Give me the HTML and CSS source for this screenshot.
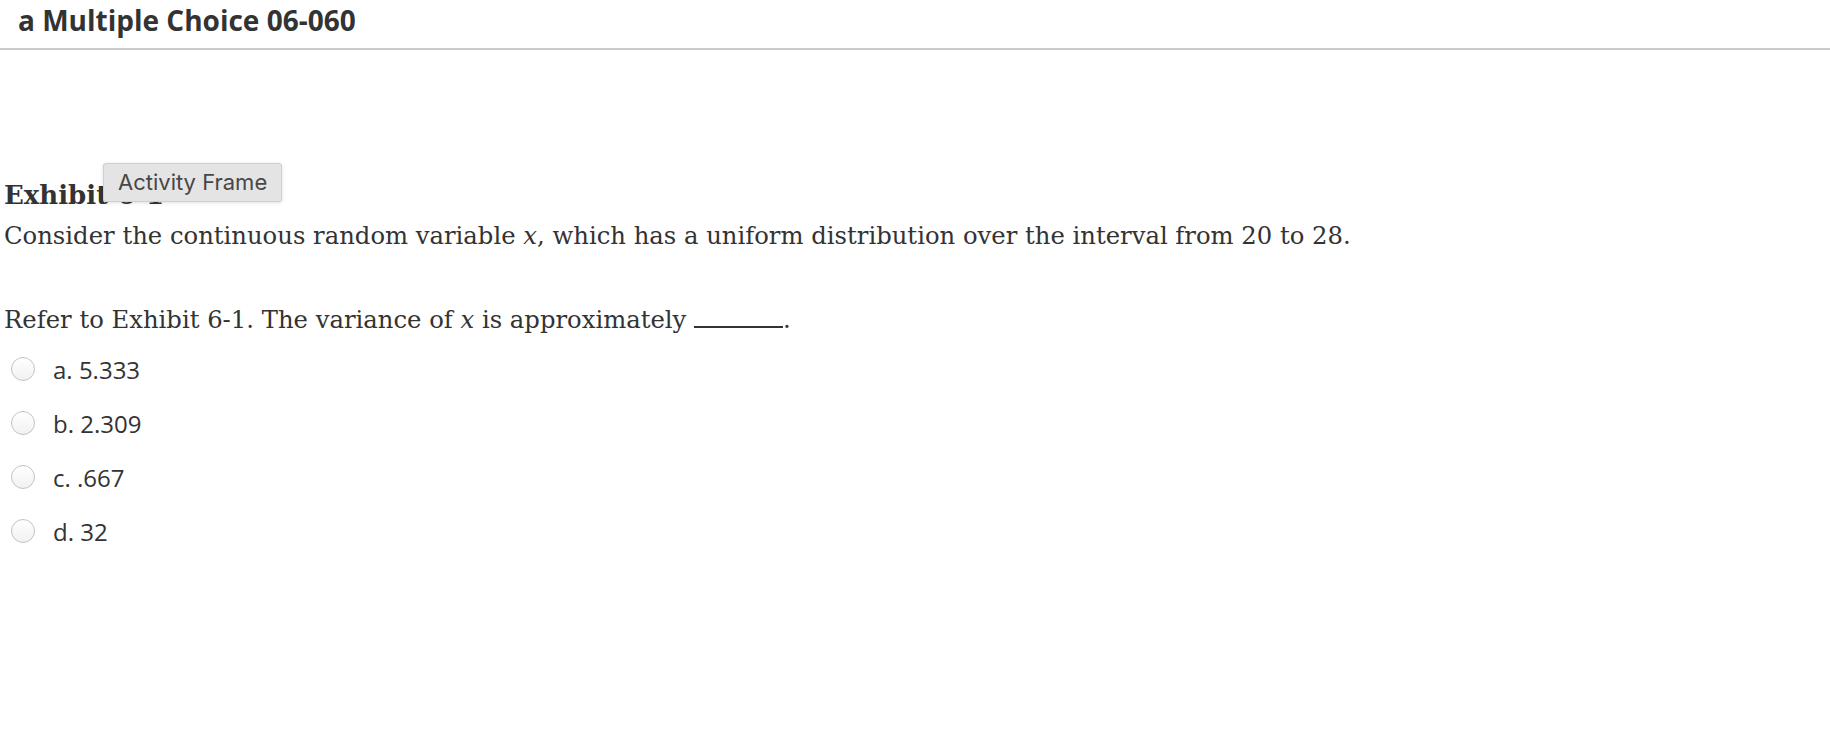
FILE: index.html
```html
<!DOCTYPE html>
<html lang="en">
<head>
  <meta charset="UTF-8" />
  <title>a Multiple Choice 06-060</title>
  <link rel="stylesheet" href="styles.css">
</head>
<body>
  <div class="title-bar">
    <h1>a Multiple Choice 06-060</h1>
  </div>

  <div class="question">
    <div class="exhibit">
      <h2>Exhibit 6-1</h2>
      <div class="tooltip">Activity Frame</div>
    </div>
    <p class="stem">Consider the continuous random variable <i>x</i>, which has a uniform distribution over the interval from 20 to 28.</p>

    <p class="prompt">Refer to Exhibit 6-1. The variance of <i>x</i> is approximately <span class="blank"></span>.</p>

    <ul class="choices">
      <li><span class="radio"></span>a. 5.333</li>
      <li><span class="radio"></span>b. 2.309</li>
      <li><span class="radio"></span>c. .667</li>
      <li><span class="radio"></span>d. 32</li>
    </ul>
  </div>
</body>
</html>
```

FILE: styles.css
```css
body {
  margin: 0;
  background: #fff;
  color: #333;
  font-family: 'Open Sans', sans-serif;
}
.title-bar {
  border-bottom: 2px solid #cbcbcb;
  height: 48px;
}
.title-bar h1 {
  margin: 0;
  padding: 0 0 0 18px;
  font-size: 28px;
  font-weight: bold;
  line-height: 40px;
  color: #333;
}
.question {
  padding: 0 4px;
  font-family: 'DejaVu Serif', Georgia, serif;
  color: #333;
}
.exhibit {
  position: relative;
  margin-top: 128px;
}
.exhibit h2 {
  margin: 0;
  font-size: 26px;
  line-height: 34px;
  font-weight: bold;
}
.tooltip {
  position: absolute;
  left: 99px;
  top: -15px;
  height: 37px;
  padding: 0 14px;
  background: #e4e4e5;
  border: 1px solid #cfcfcf;
  border-radius: 3px;
  box-shadow: 0 1px 4px rgba(0, 0, 0, 0.12);
  font-family: Inter, 'Open Sans', sans-serif;
  font-size: 22px;
  line-height: 37px;
  color: #474747;
}
.stem, .prompt {
  margin: 0;
  font-size: 24.3px;
  line-height: 40px;
}
.stem {
  margin-top: 4px;
}
.prompt {
  margin-top: 44px;
}
.blank {
  display: inline-block;
  width: 89px;
  border-bottom: 2px solid #333;
}
.choices {
  list-style: none;
  margin: 2px 0 0;
  padding: 0;
  font-family: 'Open Sans', sans-serif;
  font-size: 24px;
}
.choices li {
  display: flex;
  align-items: center;
  height: 54px;
}
.radio {
  width: 22px;
  height: 22px;
  border: 1px solid #c3c3c3;
  border-radius: 50%;
  background: linear-gradient(#fff, #f1f1f1);
  margin: 0 18px 0 7px;
}
```
